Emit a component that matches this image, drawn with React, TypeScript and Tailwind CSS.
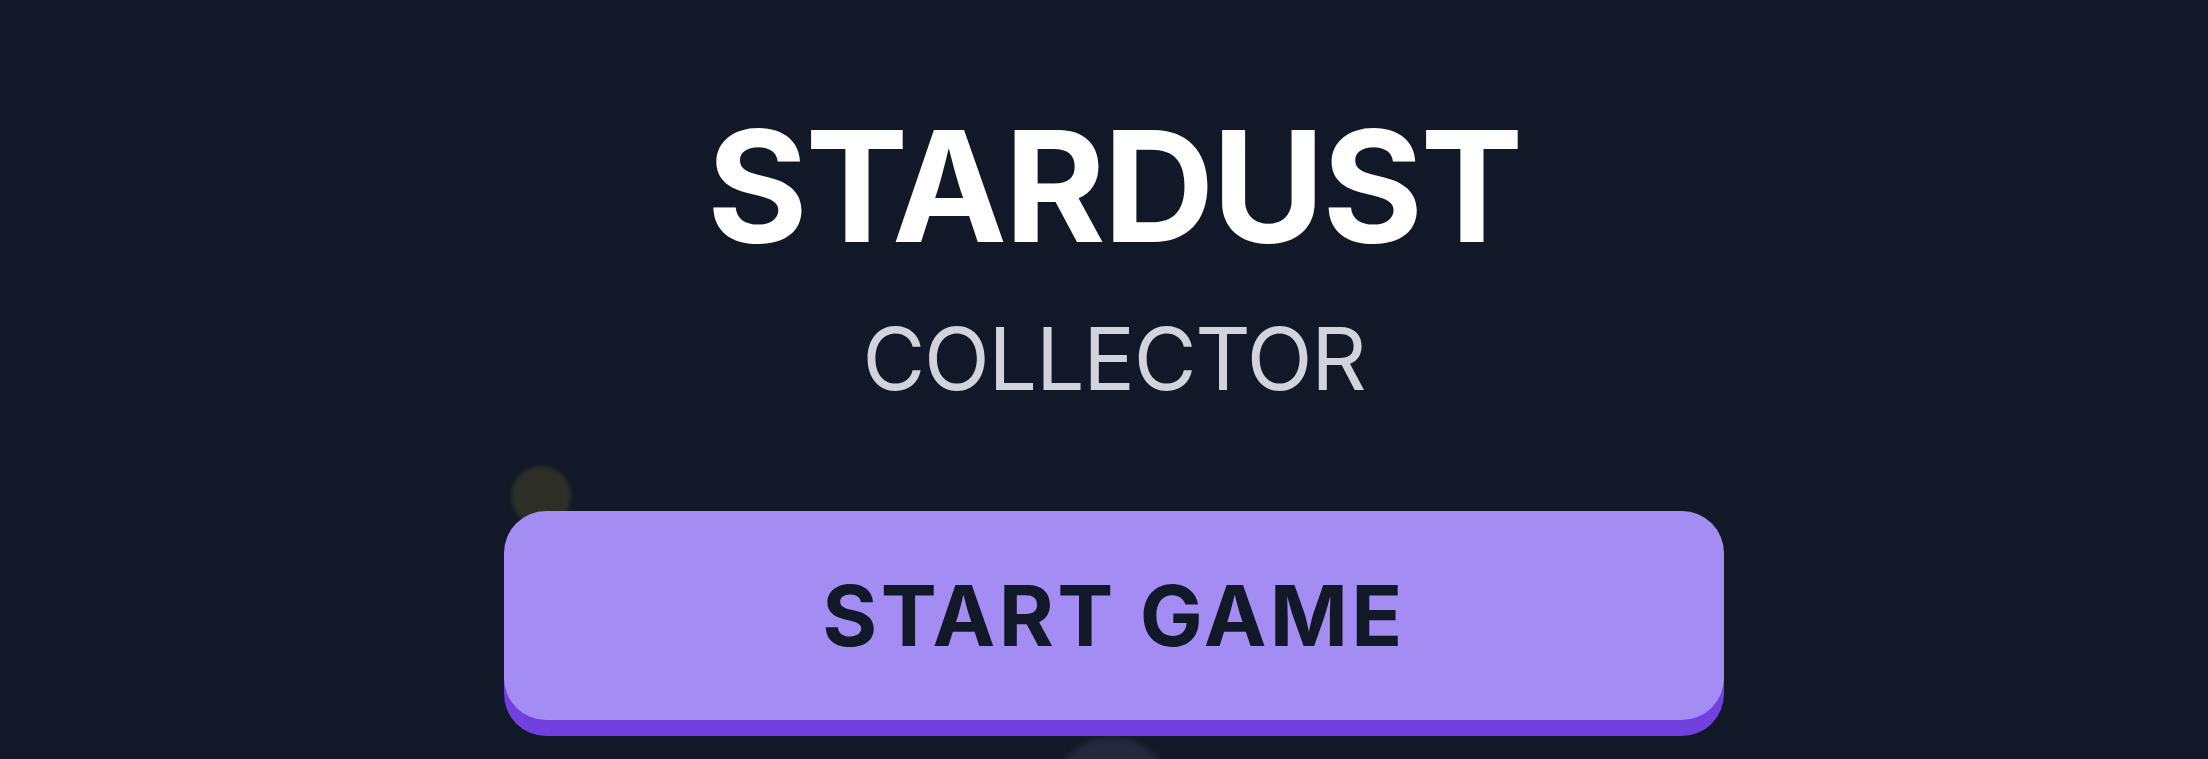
import React from "react";

// Floating background particles sit behind the menu content
const Particle: React.FC<{ className: string }> = ({ className }) => (
  <div className={`absolute rounded-full pointer-events-none ${className}`} />
);

export default function App() {
  return (
    <div
      className="relative w-full h-[759px] overflow-hidden bg-[#111827]"
      style={{ fontFamily: "Inter, 'Noto Sans', sans-serif" }}
    >
      <Particle className="left-[511px] top-[466px] w-[60px] h-[60px] bg-[#3a3a26] opacity-70 blur-[2px]" />
      <Particle className="left-[1052px] top-[737px] w-[120px] h-[120px] bg-[#2c2d45] opacity-80 blur-[3px]" />

      <div className="relative flex flex-col items-center pt-[109px] pl-[20px]">
        <h1 className="text-white font-bold leading-none text-[154px] tracking-[-0.016em]">
          STARDUST
        </h1>
        <p className="mt-[53px] text-[#d1d5db] font-normal leading-none text-[86px] tracking-[-0.015em]">
          COLLECTOR
        </p>

        <button className="mt-[109px] w-[1220px] h-[209px] rounded-[42px] bg-[#a38cf2] shadow-[0_16px_0_#7141e0] flex items-center justify-center">
          <span className="text-[#111827] font-bold leading-none text-[84px] tracking-[0.04em]">
            START GAME
          </span>
        </button>
      </div>
    </div>
  );
}
